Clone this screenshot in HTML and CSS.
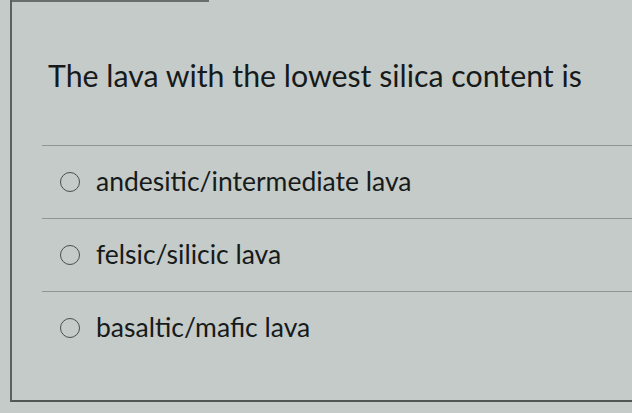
FILE: index.html
```html
<!DOCTYPE html>
<html>
<head>
<meta charset="utf-8">
<link rel="stylesheet" href="styles.css">
</head>
<body>
<div class="frame">
  <div class="topline"></div>
  <div class="question">The lava with the lowest silica content is</div>
  <div class="options">
    <label class="option"><span class="radio"></span><span class="label">andesitic/intermediate lava</span></label>
    <label class="option"><span class="radio"></span><span class="label">felsic/silicic lava</span></label>
    <label class="option"><span class="radio"></span><span class="label">basaltic/mafic lava</span></label>
  </div>
</div>
</body>
</html>
```
FILE: styles.css
```css
html, body {
  margin: 0;
  padding: 0;
  background: #c4cbc8;
}
body {
  font-family: Lato, "Open Sans", sans-serif;
  color: #161a1a;
  width: 632px;
  height: 413px;
  overflow: hidden;
}
.frame {
  margin-left: 10px;
  height: 402px;
  box-sizing: border-box;
  border-left: 2px solid #5c6160;
  border-bottom: 2px solid #525756;
}
.topline {
  width: 197px;
  height: 2px;
  background: #686e6d;
}
.question {
  height: 143px;
  box-sizing: border-box;
  padding: 55px 0 0 36px;
  font-size: 30.3px;
  line-height: 1.2;
}
.options {
  margin-left: 30px;
}
.option {
  display: flex;
  align-items: center;
  height: 72px;
  border-top: 1px solid #8e9593;
  padding-left: 18px;
  gap: 16px;
}
.radio {
  width: 18px;
  height: 18px;
  border: 1.5px solid #4a4f4e;
  border-radius: 50%;
  flex: none;
}
.label {
  font-size: 26.5px;
  line-height: 1.2;
}
```
